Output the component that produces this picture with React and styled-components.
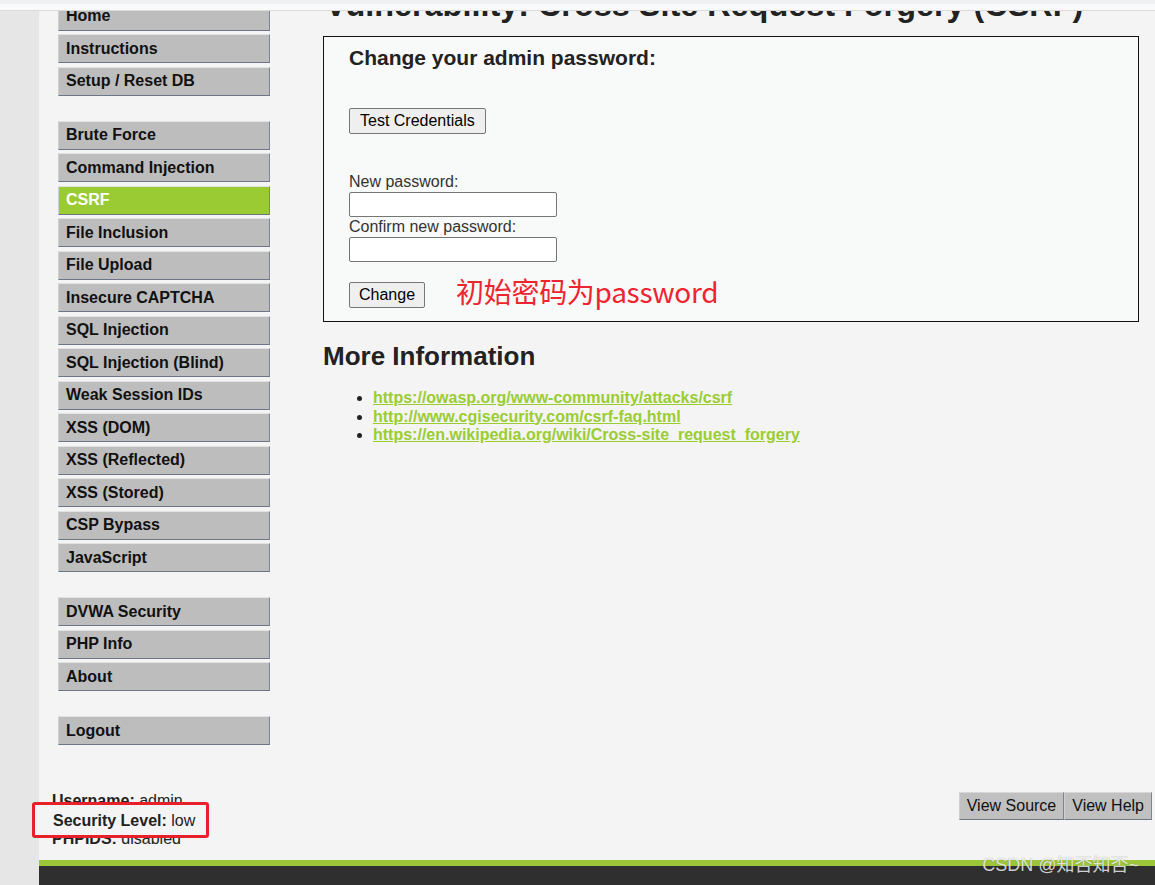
import React from 'react'
import styled, { createGlobalStyle, css } from 'styled-components'

const GlobalStyle = createGlobalStyle`
  html, body {
    margin: 0;
    padding: 0;
    overflow: hidden;
    background: #e6e6e6;
    font-family: "Liberation Sans", Arial, sans-serif;
  }
  * { box-sizing: border-box; }
`

const BrowserBar = styled.div`
  height: 11px;
  background: linear-gradient(#eef0f2 0 4px, #fafafa 4px 10px);
  border-bottom: 1px solid #dadada;
`

const Viewport = styled.div`
  height: 874px;
  display: flex;
  overflow: hidden;
`

const LeftStrip = styled.div`
  width: 39px;
  flex: none;
  background: #e6e6e6;
`

const Page = styled.div`
  flex: 1;
  display: flex;
  flex-direction: column;
  background: #f4f4f4;
  color: #222;
`

const Content = styled.div`
  flex: 1;
  display: flex;
  flex-direction: column;
`

const Body = styled.div`
  display: flex;
  margin-top: -24px;
`

const MenuColumn = styled.div`
  width: 212px;
  margin-left: 19px;
  padding-top: 14.5px;
  flex: none;
`

const MenuGroup = styled.ul`
  list-style: none;
  margin: 0 0 25px 0;
  padding: 0;
`

const MenuItem = styled.li`
  height: 29px;
  margin-bottom: 3.5px;
  padding-left: 7px;
  display: flex;
  align-items: center;
  font-size: 16px;
  font-weight: bold;
  color: #111;
  background: #bdbdbd;
  border-top: 1px solid #e2e2e2;
  border-left: 1px solid #d0d0d0;
  border-right: 1px solid #7a8596;
  border-bottom: 1px solid #6b7789;
  ${(p) =>
    p.$active &&
    css`
      background: #9bcb33;
      color: #fff;
    `}
`

const Main = styled.div`
  margin-left: 53px;
  width: 816px;
`

const Title = styled.h1`
  margin: 0 0 12px 2px;
  font-size: 32.4px;
  line-height: 37px;
  font-weight: bold;
  color: #222;
  white-space: nowrap;
`

const FormBox = styled.div`
  border: 1px solid #111;
  background: #f8f9f9;
  padding: 9px 25px 13px 25px;
`

const FormTitle = styled.h3`
  margin: 0;
  font-size: 21px;
  line-height: 24px;
  font-weight: bold;
  color: #222;
`

const Button = styled.button`
  font-family: "Liberation Sans", Arial, sans-serif;
  font-size: 16px;
  height: 26px;
  padding: 0 ${(p) => p.$pad || 10}px;
  color: #000;
  background: #efefef;
  border: 1px solid #767676;
  border-radius: 2px;
`

const Spacer = styled.div`
  height: ${(p) => p.$h}px;
`

const Label = styled.div`
  font-size: 16px;
  line-height: 18px;
  color: #333;
`

const Input = styled.input`
  display: block;
  width: 208px;
  height: 25px;
  margin: 1px 0 1px 0;
  background: #fff;
  border: 1px solid #767676;
  border-radius: 2px;
`

const ChangeRow = styled.div`
  display: flex;
  align-items: center;
  gap: 31px;
`

const Note = styled.span`
  margin-top: -9px;
  font-family: "Noto Sans CJK SC", "Liberation Sans", sans-serif;
  font-size: 28px;
  line-height: 30px;
  color: #ee2430;
  letter-spacing: -0.3px;
`

const SubTitle = styled.h2`
  margin: 19px 0 18px 0;
  font-size: 26px;
  line-height: 30px;
  font-weight: bold;
  color: #222;
`

const LinkList = styled.ul`
  margin: 0;
  padding-left: 50px;
  font-size: 16px;
  line-height: 18.5px;
`

const Link = styled.a`
  color: #9acd32;
  font-weight: bold;
  text-decoration: underline;
`

const BottomBar = styled.div`
  margin-top: auto;
  display: flex;
  justify-content: space-between;
  align-items: flex-start;
  padding: 0 3px 12.5px 13px;
`

const UserInfo = styled.div`
  position: relative;
  font-size: 16px;
  line-height: 19px;
  color: #222;
`

const InfoLine = styled.div`
  b { font-weight: bold; }
`

const Highlight = styled.div`
  position: absolute;
  left: -20px;
  top: 11.5px;
  width: 177px;
  height: 36px;
  padding-left: 18px;
  display: flex;
  align-items: center;
  background: #f4f4f4;
  border: 3px solid #e8202a;
  border-radius: 3px;
`

const SourceButtons = styled.div`
  display: flex;
  margin-top: 1.5px;
`

const GreyButton = styled.div`
  height: 28px;
  padding: 0 7px;
  display: flex;
  align-items: center;
  font-size: 16px;
  color: #111;
  background: #c0c0c0;
  border-top: 1px solid #d8d8d8;
  border-left: 1px solid #cfcfcf;
  border-right: 1px solid #7a8596;
  border-bottom: 1px solid #6b7789;
`

const Footer = styled.div`
  position: relative;
  height: 25px;
  flex: none;
  background: #2f2f2f;
  border-top: 6px solid #9dc63a;
`

const Watermark = styled.div`
  position: absolute;
  right: 16px;
  top: -11px;
  font-family: "Liberation Sans", "Noto Sans CJK SC", sans-serif;
  font-size: 18px;
  line-height: 20px;
  color: rgba(255, 255, 255, 0.8);
  text-shadow: 0 0 1px rgba(0, 0, 0, 0.35);
`

const groups = [
  ['Home', 'Instructions', 'Setup / Reset DB'],
  [
    'Brute Force',
    'Command Injection',
    'CSRF',
    'File Inclusion',
    'File Upload',
    'Insecure CAPTCHA',
    'SQL Injection',
    'SQL Injection (Blind)',
    'Weak Session IDs',
    'XSS (DOM)',
    'XSS (Reflected)',
    'XSS (Stored)',
    'CSP Bypass',
    'JavaScript',
  ],
  ['DVWA Security', 'PHP Info', 'About'],
  ['Logout'],
]

const links = [
  'https://owasp.org/www-community/attacks/csrf',
  'http://www.cgisecurity.com/csrf-faq.html',
  'https://en.wikipedia.org/wiki/Cross-site_request_forgery',
]

export default function App() {
  return (
    <>
      <GlobalStyle />
      <BrowserBar />
      <Viewport>
        <LeftStrip />
        <Page>
          <Content>
            <Body>
              <MenuColumn>
                {groups.map((items, i) => (
                  <MenuGroup key={i}>
                    {items.map((label) => (
                      <MenuItem key={label} $active={label === 'CSRF'}>
                        {label}
                      </MenuItem>
                    ))}
                  </MenuGroup>
                ))}
              </MenuColumn>

              <Main>
                <Title>Vulnerability: Cross Site Request Forgery (CSRF)</Title>
                <FormBox>
                  <FormTitle>Change your admin password:</FormTitle>
                  <Spacer $h={38} />
                  <Button>Test Credentials</Button>
                  <Spacer $h={39} />
                  <Label>New password:</Label>
                  <Input type="password" />
                  <Label>Confirm new password:</Label>
                  <Input type="password" />
                  <Spacer $h={19} />
                  <ChangeRow>
                    <Button $pad={9}>Change</Button>
                    <Note>初始密码为password</Note>
                  </ChangeRow>
                </FormBox>

                <SubTitle>More Information</SubTitle>
                <LinkList>
                  {links.map((href) => (
                    <li key={href}>
                      <Link href={href}>{href}</Link>
                    </li>
                  ))}
                </LinkList>
              </Main>
            </Body>

            <BottomBar>
              <UserInfo>
                <InfoLine><b>Username:</b> admin</InfoLine>
                <InfoLine><b>Security Level:</b> low</InfoLine>
                <InfoLine><b>PHPIDS:</b> disabled</InfoLine>
                <Highlight>
                  <InfoLine><b>Security Level:</b> low</InfoLine>
                </Highlight>
              </UserInfo>
              <SourceButtons>
                <GreyButton>View Source</GreyButton>
                <GreyButton>View Help</GreyButton>
              </SourceButtons>
            </BottomBar>
          </Content>
          <Footer>
            <Watermark>CSDN @知否知否~</Watermark>
          </Footer>
        </Page>
      </Viewport>
    </>
  )
}
